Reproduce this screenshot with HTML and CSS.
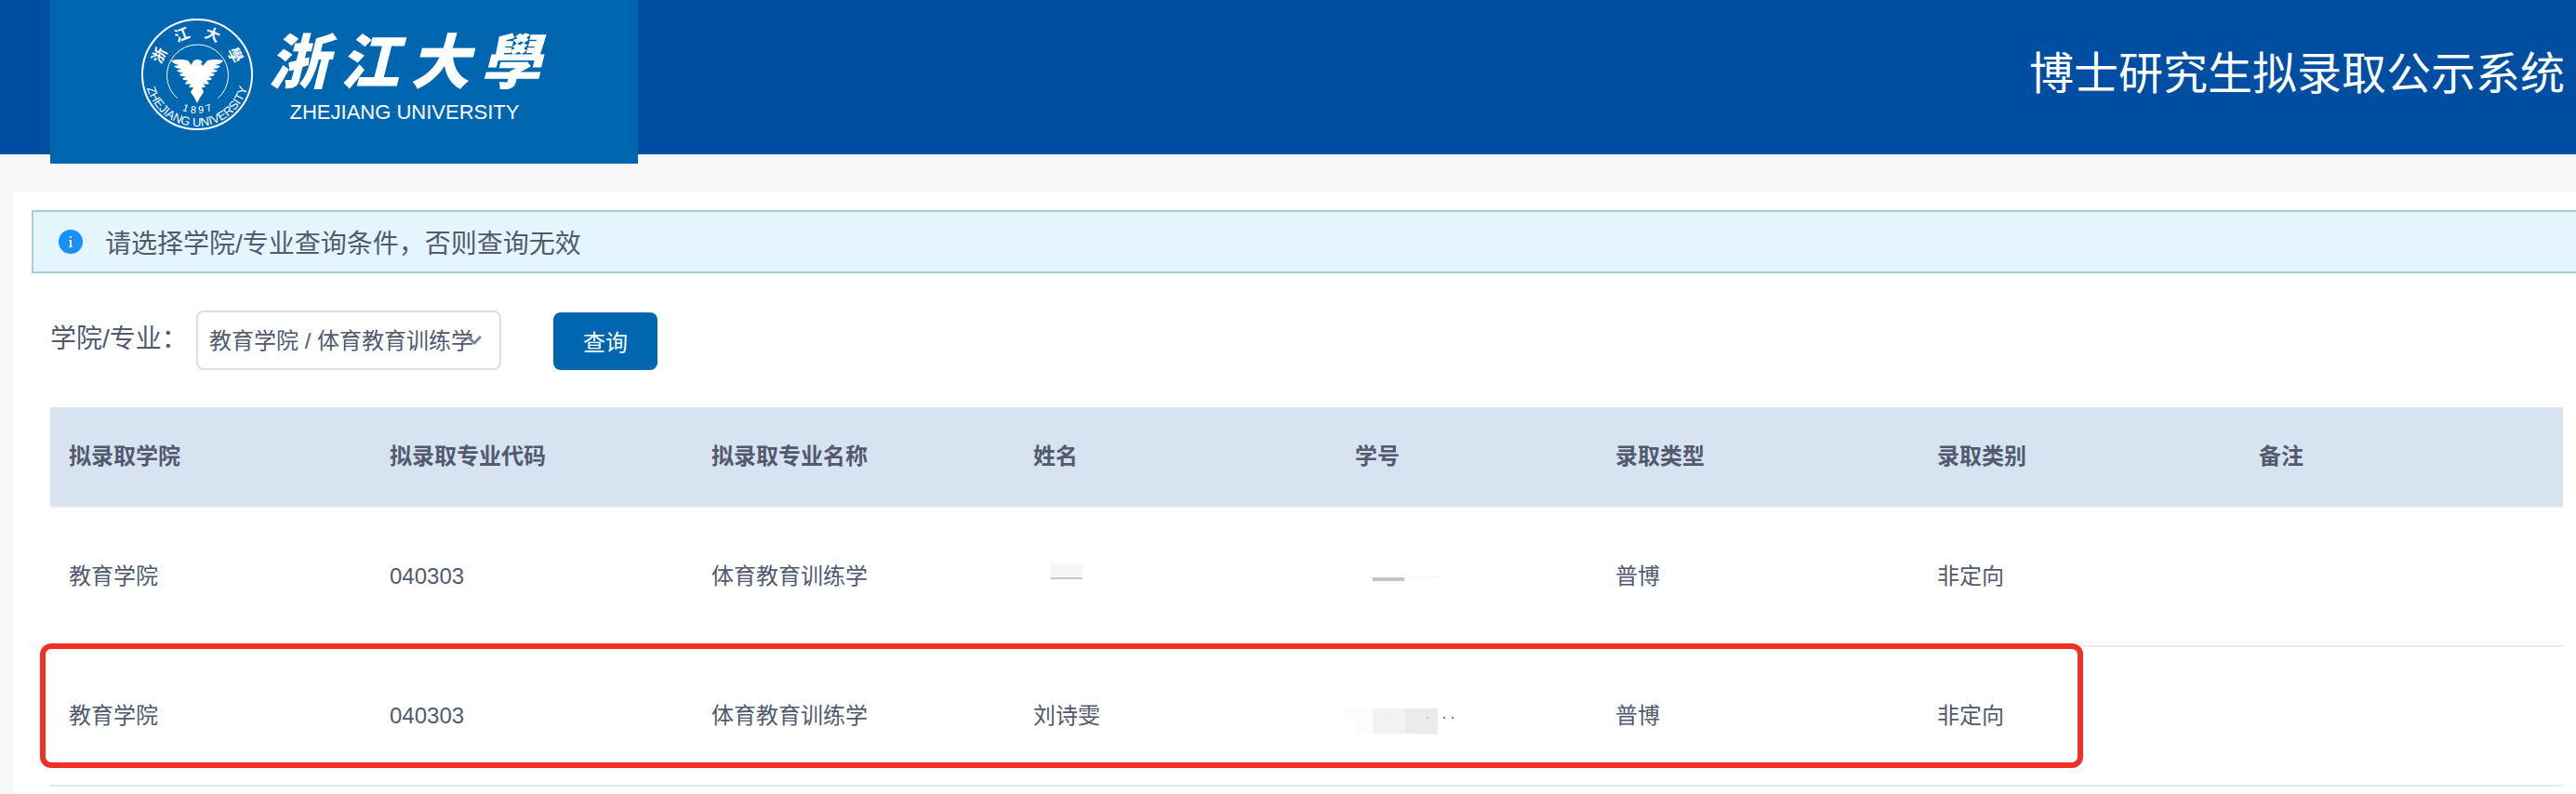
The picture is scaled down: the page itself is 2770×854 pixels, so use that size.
FILE: index.html
```html
<!DOCTYPE html>
<html lang="zh-CN">
<head>
  <meta charset="UTF-8" />
  <meta name="viewport" content="width=device-width, initial-scale=1.0" />
  <title>博士研究生拟录取公示系统</title>
  <link rel="stylesheet" href="styles.css">
</head>
<body>
  <header class="header">
    <a class="logo" href="#" aria-label="浙江大学">
      <svg class="seal" viewBox="0 0 124 124">
        <defs>
          <path id="topArc" d="M22 62 A40 40 0 0 1 102 62" />
          <path id="yearArc" d="M20 62 A42 42 0 0 0 104 62" />
          <path id="nameArc" d="M6 62 A56 56 0 0 0 118 62" />
        </defs>
        <circle class="ring" cx="62" cy="62" r="59" />
        <path class="ring-thin" d="M41 88 A33 33 0 1 1 84 88" />
        <path class="eagle" d="M34 47 Q44 45 52 47 L56 52 Q57 46 62 46 Q66 46 68 49 L66 50 L68 53 L73 47 Q82 45 90 47 Q88 51 81 52 L87 53 Q85 56 79 56 L84 58 Q82 60 77 60 L81 62 Q79 65 74 64 L78 67 Q76 69 72 68 L75 72 Q73 73 69 72 L71 76 L67 76 L69 81 L65 87 L62 93 L59 87 L55 81 L58 76 L53 76 L55 72 Q51 73 49 72 L52 68 Q48 69 46 67 L50 64 Q45 65 43 62 L47 60 Q42 60 40 58 L45 56 Q39 56 37 53 L43 52 Q36 51 34 47 Z" />
        <text class="seal-cn"><textPath href="#topArc" startOffset="50%">浙&#160;&#160;&#160;江&#160;&#160;&#160;大&#160;&#160;&#160;學</textPath></text>
        <text class="seal-year"><textPath href="#yearArc" startOffset="50%">1 8 9 7</textPath></text>
        <text class="seal-en"><textPath href="#nameArc" startOffset="50%">ZHEJIANG UNIVERSITY</textPath></text>
      </svg>
      <span class="wordmark">
        <span class="name-cn"><span>浙</span><span>江</span><span>大</span><span>學</span></span>
        <span class="name-en">ZHEJIANG UNIVERSITY</span>
      </span>
    </a>
    <h1>博士研究生拟录取公示系统</h1>
  </header>

  <main class="card">
    <div class="alert" role="alert">
      <svg class="info" viewBox="0 0 26 26">
        <circle cx="13" cy="13" r="13" fill="#1890ff" />
        <circle cx="13" cy="8" r="1" fill="#fff" />
        <path d="M11 11h3v7h1v1h-4v-1h1v-6h-1z" fill="#fff" />
      </svg>
      <span>请选择学院/专业查询条件，否则查询无效</span>
    </div>

    <form class="search">
      <label for="major">学院/专业：</label>
      <div class="select-box">
        <select id="major">
          <option>教育学院 / 体育教育训练学</option>
        </select>
        <svg class="arrow" viewBox="0 0 18 12">
          <path d="M2 2 L9 9 L16 2" />
        </svg>
      </div>
      <button type="button" class="btn">查询</button>
    </form>

    <div class="table-wrap">
      <table>
        <colgroup>
          <col class="first"><col class="wide"><col class="wide"><col class="wide">
          <col class="narrow"><col class="wide"><col class="wide"><col>
        </colgroup>
        <thead>
          <tr>
            <th>拟录取学院</th>
            <th>拟录取专业代码</th>
            <th>拟录取专业名称</th>
            <th>姓名</th>
            <th>学号</th>
            <th>录取类型</th>
            <th>录取类别</th>
            <th>备注</th>
          </tr>
        </thead>
        <tbody>
          <tr>
            <td>教育学院</td>
            <td>040303</td>
            <td>体育教育训练学</td>
            <td>
              <svg class="mask" viewBox="0 0 130 60">
                <path fill="#f6f6f6" d="M19 16h34v14H19z" />
                <path fill="#c8c8c8" d="M19 31h34v2H19z" />
              </svg>
            </td>
            <td>
              <svg class="mask" viewBox="0 0 130 60">
                <path fill="#c4c4c4" d="M19 31h34v4H19z" />
                <path fill="#f4f4f4" d="M53 32l38-2v1l-38 2z" />
              </svg>
            </td>
            <td>普博</td>
            <td>非定向</td>
            <td></td>
          </tr>
          <tr>
            <td>教育学院</td>
            <td>040303</td>
            <td>体育教育训练学</td>
            <td>刘诗雯</td>
            <td>
              <svg class="mask" viewBox="0 0 130 60">
                <path fill="#fcfcfc" d="M-12 22h31v27H0V34h-12z" />
                <path fill="#f2f2f2" d="M19 22h35v27H19z" />
                <path fill="#ebebeb" d="M54 22h35v28l-35-1z" />
                <path fill="#bbb" d="M77 31h2v2h-2z" />
                <path fill="#777" d="M95 31h2v2h-2zM104 31h2v2h-2z" />
              </svg>
            </td>
            <td>普博</td>
            <td>非定向</td>
            <td></td>
          </tr>
        </tbody>
      </table>
      <div class="highlight"></div>
    </div>
  </main>
</body>
</html>
```
FILE: styles.css
```css
* {
  margin: 0;
  padding: 0;
  box-sizing: border-box;
}

body {
  font-family: "Liberation Sans", "Noto Sans CJK SC", sans-serif;
  font-size: 24px;
  color: #515a6e;
  background: #f5f7f9;
  min-height: 100vh;
  display: flex;
  flex-direction: column;
  overflow-x: hidden;
}

.header {
  display: flex;
  justify-content: space-between;
  align-items: flex-start;
  height: 166px;
  padding: 0 12px 0 54px;
  background: #004ea1;
  color: #fff;
}

.header h1 {
  font-size: 48px;
  line-height: 160px;
  font-weight: 400;
}

/* the logo plate hangs a little below the bar */
.logo {
  display: flex;
  gap: 16px;
  width: 632px;
  height: 176px;
  padding: 18px 0 0 96px;
  background: #0066b0;
  color: #fff;
  text-decoration: none;
}

.seal {
  width: 124px;
  height: 124px;
}

.ring {
  fill: none;
  stroke: #fff;
  stroke-width: 2;
}

.ring-thin {
  fill: none;
  stroke: #fff;
  stroke-width: 1;
}

.eagle {
  fill: #fff;
}

.seal text {
  fill: #fff;
  text-anchor: middle;
}

.seal-cn {
  font-size: 16px;
  font-weight: 700;
}

.seal-year {
  font-size: 11px;
}

.seal-en {
  font-size: 13px;
}

.wordmark {
  display: flex;
  flex-direction: column;
  align-items: center;
  width: 290px;
}

.name-cn {
  display: flex;
  gap: 12px;
  font-family: "Noto Sans CJK TC", sans-serif;
  font-size: 64px;
  font-style: italic;
  font-weight: 900;
  line-height: 88px;
}

.name-en {
  font-size: 22px;
  line-height: 30px;
}

.card {
  flex: 1;
  margin: 40px 0 0 14px;
  padding: 20px 0 0 20px;
  background: #fff;
}

.alert {
  display: flex;
  align-items: center;
  gap: 24px;
  height: 68px;
  padding-left: 27px;
  font-size: 28px;
  background: #e4f5fd;
  border: 2px solid #a3d0dc;
  border-right: none;
}

.info {
  width: 26px;
  height: 26px;
}

.search {
  display: flex;
  align-items: center;
  margin: 40px 0 40px 20px;
}

.search label {
  width: 157px;
  padding-bottom: 2px;
  font-size: 28px;
  line-height: 40px;
  white-space: nowrap;
}

.select-box {
  position: relative;
  width: 328px;
  margin-right: 56px;
}

.select-box select {
  width: 100%;
  height: 64px;
  padding: 0 12px;
  font: inherit;
  color: inherit;
  background: #fff;
  border: 2px solid #dcdee2;
  border-radius: 8px;
  appearance: none;
}

.arrow {
  position: absolute;
  right: 20px;
  top: 26px;
  width: 18px;
  height: 12px;
  fill: none;
  stroke: #808695;
  stroke-width: 3;
}

.btn {
  align-self: flex-end;
  width: 112px;
  height: 62px;
  padding-bottom: 2px;
  font: inherit;
  color: #fff;
  background: #0066b0;
  border: none;
  border-radius: 8px;
  cursor: pointer;
}

.table-wrap {
  position: relative;
  margin: 0 14px 0 20px;
}

table {
  width: 100%;
  table-layout: fixed;
  border-collapse: separate;
  border-spacing: 0;
}

.first {
  width: 345px;
}

.wide {
  width: 346px;
}

.narrow {
  width: 280px;
}

th,
td {
  padding: 0 20px;
  line-height: 36px;
  text-align: left;
  border-bottom: 2px solid #e8eaec;
}

th {
  height: 108px;
  font-weight: 700;
  background: #d7e3f1;
}

td {
  height: 150px;
}

.mask {
  display: block;
  width: 130px;
  height: 60px;
  overflow: visible;
}

/* red frame round the second record */
.highlight {
  position: absolute;
  left: -11px;
  right: 516px;
  bottom: 20px;
  height: 134px;
  border: 6px solid #ee3124;
  border-radius: 12px;
}
```
